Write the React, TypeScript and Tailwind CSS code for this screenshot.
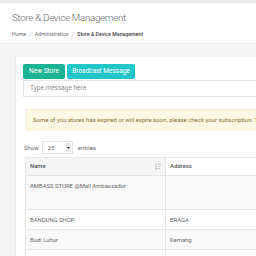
import React from 'react';

const rows = [
  { name: 'AMBASS STORE @Mall Ambassador', address: '', tall: true },
  { name: 'BANDUNG SHOP', address: 'BRAGA' },
  { name: 'Budi Luhur', address: 'Kemang' },
  { name: 'DENIS SHOP', address: 'Jl. Sukajadi No 11' },
];

const SortIcon = () => (
  <svg width="6" height="7" viewBox="0 0 6 7" className="shrink-0">
    <path d="M1 0.5v6M0 5l1 1.5L2 5" stroke="#b5b5b5" strokeWidth="0.8" fill="none" />
    <path d="M3 1.5h3M3 3.5h2.3M3 5.5h1.6" stroke="#b5b5b5" strokeWidth="0.8" />
  </svg>
);

export default function App() {
  return (
    <div
      className="w-[256px] h-[256px] overflow-hidden bg-[#f3f3f4] text-[#676a6c]"
      style={{ fontFamily: 'Roboto, "Liberation Sans", sans-serif' }}
    >
      <div className="h-[3px] bg-[#e9e9e9]" />
      <div className="h-[41px] bg-white border-b border-[#e7eaec] pl-[12px] pt-[8px]">
        <h2 className="text-[9.8px] font-light leading-[14px] tracking-[-0.3px] text-[#676a6c] whitespace-nowrap">
          Store &amp; Device Management
        </h2>
        <div className="mt-[5px] text-[5.2px] leading-[8px] whitespace-nowrap text-[#676a6c]">
          Home <span className="mx-[2px] text-[#bbb]">/</span> Administration{' '}
          <span className="mx-[2px] text-[#bbb]">/</span>{' '}
          <span className="font-medium text-[#444]">Store &amp; Device Management</span>
        </div>
      </div>
      <div className="pl-[15px] pt-[13px]">
        <div className="bg-white border-l border-[#e7eaec] pl-[7px] pt-[7px] h-[220px]">
          <div className="flex gap-[2px]">
            <button className="h-[15px] w-[42px] rounded-[2px] bg-[#1ab394] text-white text-[6.5px] leading-[15px] whitespace-nowrap">
              New Store
            </button>
            <button className="h-[15px] w-[68px] rounded-[2px] bg-[#23c6c8] text-white text-[6.5px] leading-[15px] whitespace-nowrap">
              Broadcast Message
            </button>
          </div>
          <div className="mt-[1px] h-[17px] border border-r-0 border-[#e5e6e7] pl-[6px] text-[6.5px] leading-[15px] text-[#8e8e8e] whitespace-nowrap">
            Type message here
          </div>
          <div className="mt-[12px] ml-[3px] h-[21px] bg-[#fcf8e3] border border-r-0 border-[#faebcc] pl-[6px] text-[6px] leading-[19px] text-[#8a6d3b] whitespace-nowrap overflow-hidden">
            Some of you stores has expired or will expire soon, please check your subscription. Thank you
          </div>
          <div className="mt-[11px] ml-[1px] flex items-center h-[13px] text-[6px] whitespace-nowrap">
            <span>Show</span>
            <div className="ml-[3px] flex h-[13px] w-[31px] border border-[#e5e6e7]">
              <span className="flex-1 pl-[5px] leading-[12px]">25</span>
              <span className="w-[5px] my-[1px] mr-[1px] bg-[#e8e8e8] flex items-center justify-center">
                <svg width="3" height="2" viewBox="0 0 3 2">
                  <path d="M0 0h3L1.5 2z" fill="#333" />
                </svg>
              </span>
            </div>
            <span className="ml-[5px]">entries</span>
          </div>
          <div className="mt-[3px] ml-[2px] border-l border-t border-[#e7e7e7] text-[5.9px] whitespace-nowrap">
            <div className="flex h-[18px] border-b border-[#e7e7e7]">
              <div className="w-[140px] bg-[#f5f5f6] flex items-center justify-between pl-[4px] pr-[4px] border-r border-[#e7e7e7]">
                <span className="font-medium text-[#555]">Name</span>
                <SortIcon />
              </div>
              <div className="flex-1 flex items-center pl-[4px] font-medium text-[#555]">Address</div>
            </div>
            {rows.map((r, i) => (
              <div
                key={r.name}
                className={`flex border-b border-[#e7e7e7] ${r.tall ? 'h-[34px]' : 'h-[20px]'} ${
                  i % 2 === 0 ? 'bg-[#f9f9f9]' : 'bg-white'
                }`}
              >
                <div className="w-[140px] border-r border-[#e7e7e7] pl-[4px] pt-[5px] leading-[10px] text-[#676a6c]">
                  {r.name}
                </div>
                <div className="flex-1 pl-[4px] pt-[5px] leading-[10px] text-[#676a6c]">{r.address}</div>
              </div>
            ))}
          </div>
        </div>
      </div>
    </div>
  );
}
